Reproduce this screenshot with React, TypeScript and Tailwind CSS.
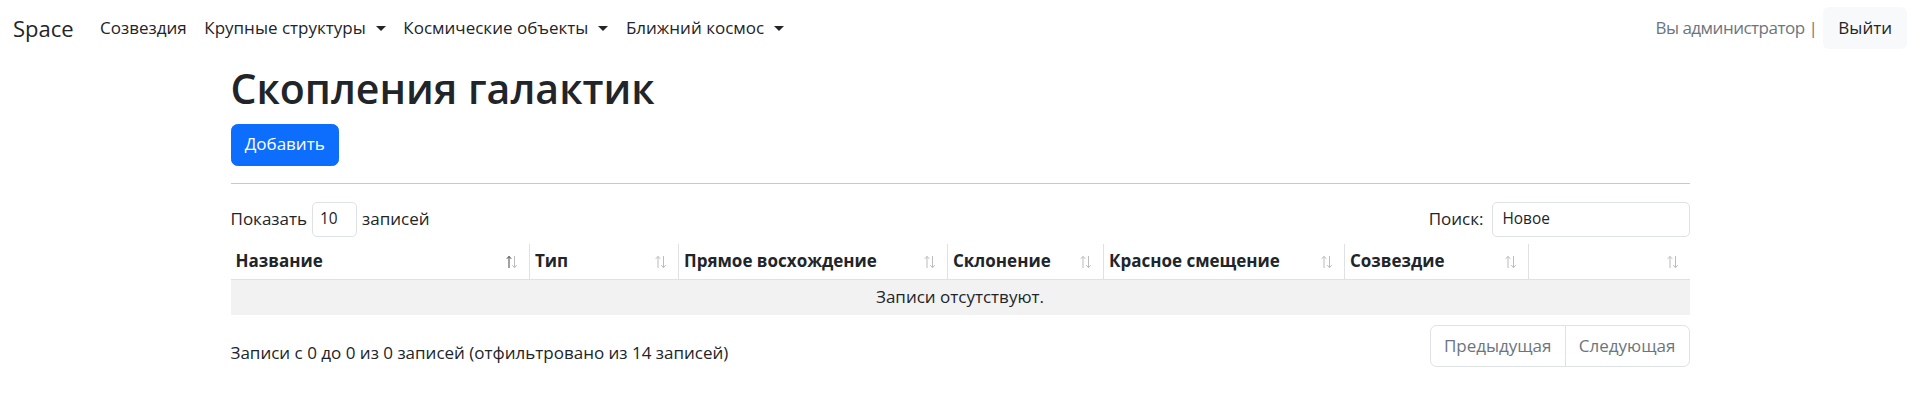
import React from "react"

const font = "font-['Open_Sans','Noto_Sans',sans-serif]"

function Caret() {
  return (
    <span className="ml-[10px] inline-block h-0 w-0 border-x-[5.3px] border-t-[5.5px] border-x-transparent border-t-[#212529] align-[3px]" />
  )
}

function SortIcon({ active }: { active?: boolean }) {
  return (
    <svg width="12" height="14" viewBox="0 0 12 14" className="shrink-0">
      <g stroke="#212529" strokeWidth="1" fill="none" opacity={active ? 0.85 : 0.3}>
        <line x1="3" y1="1.5" x2="3" y2="13" />
        <polyline points="0.8,3.8 3,1.3 5.2,3.8" />
      </g>
      <g stroke="#212529" strokeWidth="1" fill="none" opacity="0.3">
        <line x1="8.5" y1="1" x2="8.5" y2="12.5" />
        <polyline points="6.3,10.2 8.5,12.7 10.7,10.2" />
      </g>
    </svg>
  )
}

const columns = [
  { title: "Название", width: "w-[299px]", active: true },
  { title: "Тип", width: "w-[149px]" },
  { title: "Прямое восхождение", width: "w-[269px]" },
  { title: "Склонение", width: "w-[156px]" },
  { title: "Красное смещение", width: "w-[241px]" },
  { title: "Созвездие", width: "w-[184px]" },
  { title: "", width: "w-[161px]" },
]

export default function App() {
  return (
    <div className={`${font} min-h-[410px] bg-white text-[17px] leading-[26.4px] text-[#212529]`}>
      {/* navbar */}
      <nav className="flex h-[62px] items-center px-[13px] pb-[6px]">
        <span className="mr-[17.6px] text-[22px] leading-[33px]">Space</span>
        <ul className="flex items-center">
          <li className="px-[8.8px]">Созвездия</li>
          <li className="px-[8.8px]">
            Крупные структуры
            <Caret />
          </li>
          <li className="px-[8.8px]">
            Космические объекты
            <Caret />
          </li>
          <li className="px-[8.8px]">
            Ближний космос
            <Caret />
          </li>
        </ul>
        <div className="ml-auto flex items-center gap-[6px]">
          <span className="tracking-[-0.5px] text-[#6c757d]">Вы администратор |</span>
          <button
            type="button"
            className="h-[42px] rounded-[6px] bg-[#f8f9fa] px-[15px] text-[#212529]"
          >
            Выйти
          </button>
        </div>
      </nav>

      <main className="mx-auto w-[1459px]">
        <h1 className="mb-[8.8px] text-[41px] font-semibold leading-[52.8px]">Скопления галактик</h1>
        <button
          type="button"
          className="h-[42px] rounded-[6.6px] border border-[#0d6efd] bg-[#0d6efd] px-[13.2px] text-white"
        >
          Добавить
        </button>
        <hr className="my-[17.6px] border-t border-[#c8c9ca]" />

        {/* table controls */}
        <div className="flex items-center justify-between">
          <label className="flex items-center">
            Показать
            <span className="mx-[5px] flex h-[35px] w-[45px] items-center rounded-[5px] border border-[#dee2e6] pl-[7px] text-[15.4px]">
              10
            </span>
            записей
          </label>
          <label className="flex items-center">
            Поиск:
            <span className="ml-[8px] flex h-[35px] w-[198px] items-center rounded-[5px] border border-[#dee2e6] pl-[10px] text-[15.4px]">
              Новое
            </span>
          </label>
        </div>

        <table className="mt-[7px] table-fixed border-collapse">
          <colgroup>
            {columns.map((c, i) => (
              <col key={i} className={c.width} />
            ))}
          </colgroup>
          <thead>
            <tr className="h-[36px]">
              {columns.map((c, i) => (
                <th
                  key={i}
                  className={`border-b border-[#dee2e6] px-[5px] text-left font-bold ${i > 0 ? "border-l" : ""}`}
                >
                  <div className="flex items-center justify-between">
                    <span>{c.title}</span>
                    <span className="mr-[6px]">
                      <SortIcon active={c.active} />
                    </span>
                  </div>
                </th>
              ))}
            </tr>
          </thead>
          <tbody>
            <tr className="h-[35px] bg-[#f2f2f2]">
              <td colSpan={7} className="text-center">
                Записи отсутствуют.
              </td>
            </tr>
          </tbody>
        </table>

        {/* footer */}
        <div className="mt-[10px] flex items-start justify-between">
          <div className="pt-[15px]">Записи с 0 до 0 из 0 записей (отфильтровано из 14 записей)</div>
          <ul className="flex">
            <li className="flex h-[42px] items-center rounded-l-[6.6px] border border-[#dee2e6] px-[13.2px] text-[#6c757d]">
              Предыдущая
            </li>
            <li className="-ml-px flex h-[42px] items-center rounded-r-[6.6px] border border-[#dee2e6] px-[13.2px] text-[#6c757d]">
              Следующая
            </li>
          </ul>
        </div>
      </main>
    </div>
  )
}
